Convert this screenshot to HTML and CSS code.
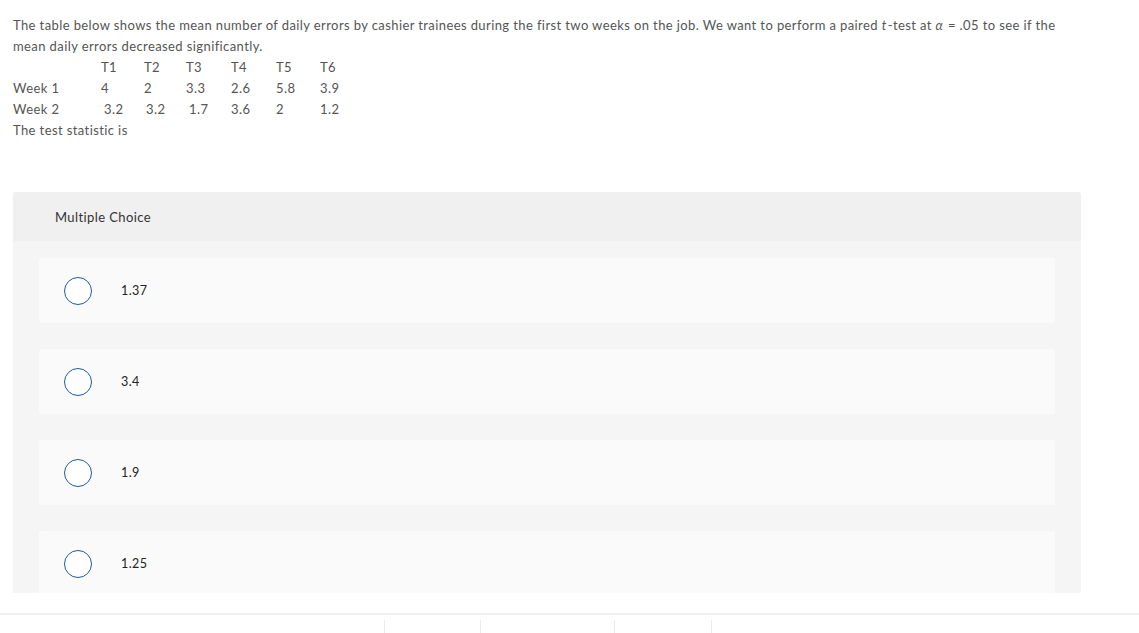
FILE: index.html
```html
<!DOCTYPE html>
<html>
<head>
<meta charset="utf-8">
<link rel="stylesheet" href="styles.css">
</head>
<body>
<div class="page">
  <div class="prompt">
    <p class="line">The table below shows the mean number of daily errors by cashier trainees during the first two weeks on the job. We want to perform a paired <i class="it">t</i>-test at <i class="it">α</i> = .05 to see if the mean daily errors decreased significantly.</p>
    <div class="row">
      <span class="lab"></span>
      <span class="c c1">T1</span><span class="c c2">T2</span><span class="c c3">T3</span><span class="c c4">T4</span><span class="c c5">T5</span><span class="c c6">T6</span>
    </div>
    <div class="row">
      <span class="lab">Week 1</span>
      <span class="c c1">4</span><span class="c c2">2</span><span class="c c3">3.3</span><span class="c c4">2.6</span><span class="c c5">5.8</span><span class="c c6">3.9</span>
    </div>
    <div class="row">
      <span class="lab">Week 2</span>
      <span class="c c1 s">3.2</span><span class="c c2 s">3.2</span><span class="c c3 s">1.7</span><span class="c c4">3.6</span><span class="c c5">2</span><span class="c c6">1.2</span>
    </div>
    <p class="line">The test statistic is</p>
  </div>

  <div class="mc">
    <div class="mc-head">Multiple Choice</div>
    <div class="mc-body">
      <div class="opt"><span class="radio"></span><span class="otext">1.37</span></div>
      <div class="opt"><span class="radio"></span><span class="otext">3.4</span></div>
      <div class="opt"><span class="radio"></span><span class="otext">1.9</span></div>
      <div class="opt last"><span class="radio"></span><span class="otext">1.25</span></div>
    </div>
  </div>

  <div class="footer">
    <span class="sep sep1"></span>
    <span class="sep sep2"></span>
    <span class="sep sep3"></span>
    <span class="sep sep4"></span>
  </div>
</div>
</body>
</html>
```
FILE: styles.css
```css
* { box-sizing: border-box; }
html, body { margin: 0; padding: 0; background: #fff; }
body {
  font-family: Lato, "Liberation Sans", sans-serif;
  font-size: 13px;
  letter-spacing: 0.4px;
  color: #555;
  width: 1139px;
  height: 633px;
  overflow: hidden;
}
.page { padding-top: 15px; }
.prompt { padding: 0 13px; width: 1075px; }
.line { margin: 0; line-height: 21px; }
.it { padding-right: 1px; }
.row { display: flex; height: 21px; line-height: 21px; }
.lab { width: 86px; flex: none; }
.c { flex: none; }
.c1 { width: 42px; padding-left: 2px; }
.c2 { width: 43px; padding-left: 3px; }
.c3 { width: 45px; padding-left: 2px; }
.c4 { width: 45px; padding-left: 2px; }
.c5 { width: 44px; padding-left: 2px; }
.c6 { width: 44px; padding-left: 2px; }
.c.s { padding-left: 5px; }

.mc {
  margin: 51px 0 0 13px;
  width: 1068px;
  height: 401px;
  background: #f5f5f5;
  border-radius: 3px 3px 0 0;
  overflow: hidden;
}
.mc-head {
  height: 49px;
  background: #f0f0f0;
  padding-left: 42px;
  line-height: 50px;
  color: #333;
  font-size: 13px;
}
.mc-body { padding: 17px 26px 0 26px; display: flex; flex-direction: column; gap: 26px; }
.opt {
  height: 65px;
  background: #fafafa;
  border-radius: 3px;
  display: flex;
  align-items: center;
  padding-left: 25px;
  flex: none;
}
.radio {
  width: 28px;
  height: 28px;
  border: 1.5px solid #1d5c9c;
  border-radius: 50%;
  background: #fff;
  flex: none;
}
.otext { margin-left: 29px; color: #222; font-size: 12.5px; }

.footer {
  margin-top: 20px;
  border-top: 2px solid #f0f0f0;
  height: 20px;
  position: relative;
}
.sep { position: absolute; top: 5px; width: 1px; height: 20px; background: #ececec; }
.sep1 { left: 384px; }
.sep2 { left: 480px; }
.sep3 { left: 614px; }
.sep4 { left: 711px; }
```
